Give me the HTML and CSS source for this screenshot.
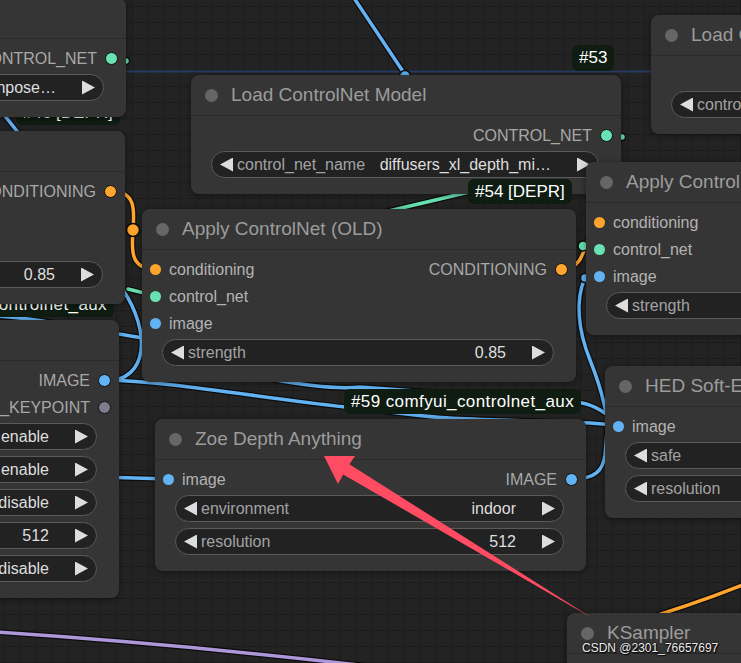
FILE: index.html
```html
<!DOCTYPE html>
<html>
<head>
<meta charset="utf-8">
<link rel="stylesheet" href="styles.css">
</head>
<body>
<div class="canvas">
  <svg class="wires" width="741" height="663" viewBox="0 0 741 663">
    <defs>
      <path id="w1" d="M350 -8 L406 76"/>
      <path id="w2" d="M-6 102 L24 140"/>
      <path id="w3" d="M-5 316 C 40 318, 90 330, 150 339"/>
      <path id="w4" d="M105 381 C 150 381, 150 330, 123 290 L 100 262"/>
      <path id="w5" d="M105 380 C 170 381, 260 398, 345 407 S 420 418, 500 420 L 590 423 Q 606 424 620 426"/>
      <path id="w6" d="M270 379 Q 330 390 360 387 L 582 403 Q 600 406 620 426"/>
      <path id="w7" d="M585 278 C 575 300, 578 330, 590 360 S 603 400, 606 412"/>
      <path id="w8" d="M572 479 C 596 479, 603 470, 605 455 L 608 420"/>
      <path id="w9" d="M100 477 L 168 479"/>
      <path id="o1" d="M111 191 C 161 191, 105 269, 155 269"/>
      <path id="o2" d="M562 269 C 590 269, 582 232, 599 223"/>
      <path id="o3" d="M625 625 Q 690 606 745 584"/>
      <path id="g1" d="M300 232 L 520 180"/>
      <path id="g2" d="M128 289 Q 142 292 156 297"/>
      <path id="p1" d="M-5 632 Q 180 644 385 668"/>
    </defs>
    <line class="navy" x1="120" y1="71.5" x2="660" y2="71.5"/>
    <g class="ol">
      <use href="#w1"/><use href="#w2"/><use href="#w3"/><use href="#w4"/><use href="#w5"/>
      <use href="#w6"/><use href="#w7"/><use href="#w8"/><use href="#w9"/>
      <use href="#o1"/><use href="#o2"/><use href="#o3"/>
      <use href="#g1"/><use href="#g2"/><use href="#p1"/>
    </g>
    <g class="wire cb">
      <use href="#w1"/><use href="#w2"/><use href="#w3"/><use href="#w4"/><use href="#w5"/>
      <use href="#w6"/><use href="#w7"/><use href="#w8"/><use href="#w9"/>
    </g>
    <g class="wire co"><use href="#o1"/><use href="#o2"/><use href="#o3"/></g>
    <g class="wire cg"><use href="#g1"/><use href="#g2"/></g>
    <g class="wire cp"><use href="#p1"/></g>
    <circle class="mk fo" cx="133" cy="230" r="6.5"/>
    <circle class="mk fb" cx="405" cy="76" r="5.5"/>
    <circle class="mk fg" cx="126" cy="61" r="3.5"/>
    <circle class="mk fg" cx="622" cy="137" r="3.5"/>
    <circle class="mk fg" cx="583" cy="246" r="5"/>
    <circle class="mk fb" cx="585" cy="278" r="4.5"/>
  </svg>

  <div class="badge b46">#46 [DEPR]</div>
  <div class="badge b58">#58 comfyui_controlnet_aux</div>

  <!-- Node A: partially off-screen top-left -->
  <div class="node n-a">
    <div class="title"><i class="tdot"></i><span>Load ControlNet Model</span></div>
    <div class="body">
      <div class="row"><span class="out">CONTROL_NET<i class="dot c-cn"></i></span></div>
      <div class="widgets">
        <div class="widget"><i class="la"></i><span class="wl">control_net_name</span><span class="wv">t2i_openpose…</span><i class="ra"></i></div>
      </div>
    </div>
  </div>

  <!-- Node B -->
  <div class="node n-b">
    <div class="title"><i class="tdot"></i><span>Apply ControlNet (OLD)</span></div>
    <div class="body">
      <div class="row"><span class="in"><i class="dot c-cond"></i>conditioning</span><span class="out">CONDITIONING<i class="dot c-cond"></i></span></div>
      <div class="row"><span class="in"><i class="dot c-cn"></i>control_net</span></div>
      <div class="row"><span class="in"><i class="dot c-img"></i>image</span></div>
      <div class="widgets">
        <div class="widget"><i class="la"></i><span class="wl">strength</span><span class="wv">0.85</span><i class="ra"></i></div>
      </div>
    </div>
  </div>

  <!-- Node C -->
  <div class="node n-c">
    <div class="title"><i class="tdot"></i><span>DWPose Estimator</span></div>
    <div class="body">
      <div class="row"><span class="in"><i class="dot c-img"></i>image</span><span class="out">IMAGE<i class="dot c-img"></i></span></div>
      <div class="row"><span class="out">POSE_KEYPOINT<i class="dot c-kp"></i></span></div>
      <div class="widgets">
        <div class="widget"><i class="la"></i><span class="wl">detect_hand</span><span class="wv">enable</span><i class="ra"></i></div>
        <div class="widget"><i class="la"></i><span class="wl">detect_body</span><span class="wv">enable</span><i class="ra"></i></div>
        <div class="widget"><i class="la"></i><span class="wl">detect_face</span><span class="wv">disable</span><i class="ra"></i></div>
        <div class="widget"><i class="la"></i><span class="wl">resolution</span><span class="wv">512</span><i class="ra"></i></div>
        <div class="widget"><i class="la"></i><span class="wl">scale_stick_for_xinsr_cn</span><span class="wv">disable</span><i class="ra"></i></div>
      </div>
    </div>
  </div>

  <!-- Node D: Load ControlNet Model -->
  <div class="node n-d">
    <div class="title"><i class="tdot"></i><span>Load ControlNet Model</span></div>
    <div class="body">
      <div class="row"><span class="out">CONTROL_NET<i class="dot c-cn"></i></span></div>
      <div class="widgets">
        <div class="widget"><i class="la"></i><span class="wl">control_net_name</span><span class="wv">diffusers_xl_depth_mi…</span><i class="ra"></i></div>
      </div>
    </div>
  </div>

  <!-- Node E: Apply ControlNet (OLD) -->
  <div class="node n-e">
    <div class="title"><i class="tdot"></i><span>Apply ControlNet (OLD)</span></div>
    <div class="body">
      <div class="row"><span class="in"><i class="dot c-cond"></i>conditioning</span><span class="out">CONDITIONING<i class="dot c-cond"></i></span></div>
      <div class="row"><span class="in"><i class="dot c-cn"></i>control_net</span></div>
      <div class="row"><span class="in"><i class="dot c-img"></i>image</span></div>
      <div class="widgets">
        <div class="widget"><i class="la"></i><span class="wl">strength</span><span class="wv">0.85</span><i class="ra"></i></div>
      </div>
    </div>
  </div>

  <!-- Node F: top right -->
  <div class="node n-f">
    <div class="title"><i class="tdot"></i><span>Load ControlNet Model</span></div>
    <div class="body">
      <div class="row"><span class="out">CONTROL_NET<i class="dot c-cn"></i></span></div>
      <div class="widgets">
        <div class="widget"><i class="la"></i><span class="wl">control_net_name</span><span class="wv">diffusers_xl_canny_mid…</span><i class="ra"></i></div>
      </div>
    </div>
  </div>

  <!-- Node G -->
  <div class="node n-g">
    <div class="title"><i class="tdot"></i><span>Apply ControlNet (OLD)</span></div>
    <div class="body">
      <div class="row"><span class="in"><i class="dot c-cond"></i>conditioning</span><span class="out">CONDITIONING<i class="dot c-cond"></i></span></div>
      <div class="row"><span class="in"><i class="dot c-cn"></i>control_net</span></div>
      <div class="row"><span class="in"><i class="dot c-img"></i>image</span></div>
      <div class="widgets">
        <div class="widget"><i class="la"></i><span class="wl">strength</span><span class="wv">0.85</span><i class="ra"></i></div>
      </div>
    </div>
  </div>

  <!-- Node H -->
  <div class="node n-h">
    <div class="title"><i class="tdot"></i><span>HED Soft-Edge Lines</span></div>
    <div class="body">
      <div class="row"><span class="in"><i class="dot c-img"></i>image</span><span class="out">IMAGE<i class="dot c-img"></i></span></div>
      <div class="widgets">
        <div class="widget"><i class="la"></i><span class="wl">safe</span><span class="wv">enable</span><i class="ra"></i></div>
        <div class="widget"><i class="la"></i><span class="wl">resolution</span><span class="wv">512</span><i class="ra"></i></div>
      </div>
    </div>
  </div>

  <!-- Node I: Zoe Depth Anything -->
  <div class="node n-i">
    <div class="title"><i class="tdot"></i><span>Zoe Depth Anything</span></div>
    <div class="body">
      <div class="row"><span class="in"><i class="dot c-img"></i>image</span><span class="out">IMAGE<i class="dot c-img"></i></span></div>
      <div class="widgets">
        <div class="widget"><i class="la"></i><span class="wl">environment</span><span class="wv">indoor</span><i class="ra"></i></div>
        <div class="widget"><i class="la"></i><span class="wl">resolution</span><span class="wv">512</span><i class="ra"></i></div>
      </div>
    </div>
  </div>

  <!-- Node J: KSampler -->
  <div class="node n-j">
    <div class="title"><i class="tdot"></i><span>KSampler</span></div>
    <div class="body">
      <div class="row"><span class="in"><i class="dot c-model"></i>model</span><span class="out">LATENT<i class="dot c-lat"></i></span></div>
    </div>
  </div>

  <div class="badge b53">#53</div>
  <div class="badge b54">#54 [DEPR]</div>
  <div class="badge b59">#59 comfyui_controlnet_aux</div>

  <svg class="overlay" width="741" height="663" viewBox="0 0 741 663">
    <polygon class="arrow" points="324,456 355,456 349.4,464.3 592,618 343.2,474.5 338,484"/>
  </svg>

  <div class="watermark">CSDN @2301_76657697</div>
</div>
</body>
</html>
```

FILE: styles.css
```css
html, body {
  margin: 0;
  padding: 0;
  background: #232323;
}

.canvas {
  position: relative;
  width: 741px;
  height: 663px;
  overflow: hidden;
  background-color: #232323;
  background-image:
    linear-gradient(#1c1c1c 1px, transparent 1px),
    linear-gradient(90deg, #1c1c1c 1px, transparent 1px);
  background-size: 16px 16px;
  background-position: 4px 6px;
  font-family: "Liberation Sans", Arial, sans-serif;
}

/* ---------- wires ---------- */
.wires, .overlay {
  position: absolute;
  left: 0;
  top: 0;
  pointer-events: none;
}
.overlay { z-index: 5; }

.navy { stroke: #283c63; stroke-width: 2; }
.ol { fill: none; stroke: #0c0c0c; stroke-width: 6; stroke-linecap: round; }
.wire { fill: none; stroke-width: 3.5; stroke-linecap: round; }
.cb { stroke: #62b3f4; }
.co { stroke: #ffa52e; }
.cg { stroke: #68e2b3; }
.cp { stroke: #ad97d9; }
.mk { stroke: #0c0c0c; stroke-width: 1.5; }
.fo { fill: #ffa52e; }
.fb { fill: #62b3f4; }
.fg { fill: #68e2b3; }

.arrow { fill: #ff4c63; }

/* ---------- badges ---------- */
.badge {
  position: absolute;
  height: 25px;
  display: flex;
  align-items: center;
  padding: 0 7px;
  background: #0e1c11;
  color: #ffffff;
  font-size: 17px;
  border-radius: 6px;
  white-space: nowrap;
}
.b46 { left: 16px; top: 100px; }
.b58 { right: 627px; top: 292px; letter-spacing: 0.4px; }
.b53 { left: 572px; top: 45px; height: 26px; z-index: 3; }
.b54 { left: 468px; top: 179px; z-index: 3; }
.b59 { left: 344px; top: 389px; letter-spacing: 0.4px; z-index: 3; }

/* ---------- nodes ---------- */
.node {
  position: absolute;
  background: #353535;
  border-radius: 8px;
  box-shadow: 0 1px 6px rgba(0, 0, 0, 0.45);
  z-index: 2;
}
.n-a { left: -330px; top: -2px; width: 456px; }
.n-b { left: -300px; top: 131px; width: 425px; }
.n-c { left: -300px; top: 320px; width: 419px; }
.n-d { left: 191px; top: 75px; width: 430px; }
.n-e { left: 142px; top: 209px; width: 434px; }
.n-f { left: 651px; top: 15px; width: 400px; }
.n-g { left: 586px; top: 162px; width: 430px; }
.n-h { left: 605px; top: 366px; width: 400px; }
.n-i { left: 155px; top: 419px; width: 431px; }
.n-j { left: 567px; top: 613px; width: 400px; }

.title {
  height: 40px;
  border-bottom: 1px solid #2a2a2a;
  display: flex;
  align-items: center;
  gap: 13px;
  padding-left: 14px;
  font-size: 19px;
  color: #9c9c9c;
  white-space: nowrap;
}
.tdot {
  width: 13px;
  height: 13px;
  border-radius: 50%;
  background: #666666;
  flex: none;
}

.body { padding: 6px 0 16px; }

.row {
  height: 27px;
  display: flex;
  align-items: center;
  font-size: 16px;
  white-space: nowrap;
}
.in {
  display: flex;
  align-items: center;
  gap: 8.5px;
  padding-left: 7.5px;
  color: #b3b3b3;
}
.out {
  margin-left: auto;
  display: flex;
  align-items: center;
  gap: 8px;
  padding-right: 8px;
  color: #a8a8a8;
}
.dot {
  width: 11px;
  height: 11px;
  border-radius: 50%;
  flex: none;
}
.out .dot {
  width: 13px;
  height: 13px;
  box-sizing: border-box;
  border: 1.5px solid #111111;
}
.c-cond { background: #ffa52e; }
.c-cn { background: #68e2b3; }
.c-img { background: #62b3f4; }
.c-kp { background: #7d7b8c; }
.c-model { background: #b39ddb; }
.c-lat { background: #ff9cf9; }

/* ---------- widgets ---------- */
.widgets {
  display: flex;
  flex-direction: column;
  gap: 6px;
  margin: 2px 22px 0 20px;
}
.widget {
  height: 27px;
  box-sizing: border-box;
  border: 1px solid #5a5a5a;
  border-radius: 14px;
  background: #222222;
  display: flex;
  align-items: center;
  padding: 0 8px;
  font-size: 16px;
  white-space: nowrap;
  overflow: hidden;
}
.la, .ra {
  width: 13px;
  height: 14px;
  background: #dddddd;
  flex: none;
}
.la {
  clip-path: polygon(100% 0, 100% 100%, 0 50%);
  margin-right: 4px;
}
.ra {
  clip-path: polygon(0 0, 100% 50%, 0 100%);
  margin-left: 26px;
}
.wl { color: #a2a2a2; flex: none; }
.wv { color: #dedede; margin-left: auto; min-width: 0; overflow: hidden; }

/* ---------- watermark ---------- */
.watermark {
  position: absolute;
  left: 582px;
  top: 641px;
  z-index: 6;
  font-size: 12px;
  color: #ececec;
  white-space: nowrap;
  text-shadow: 0 0 2px #000, 1px 1px 1px #000;
}
```
